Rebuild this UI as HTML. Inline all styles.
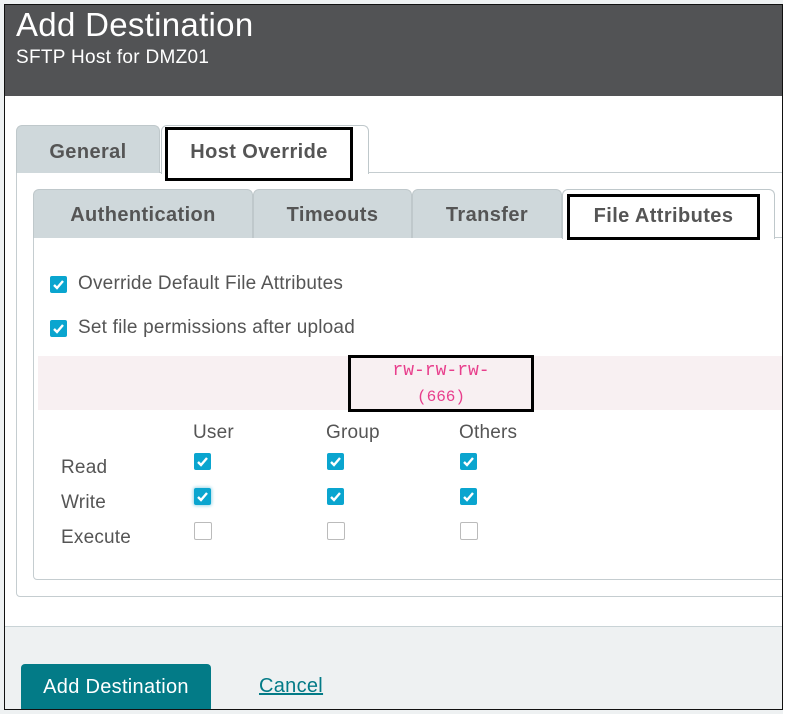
<!DOCTYPE html>
<html><head><style>
body{margin:0;width:786px;height:714px;background:#eef1f2;position:relative;overflow:hidden;font-family:"Liberation Sans",sans-serif;color:#555}
.a{position:absolute}
.frame{left:4px;top:4px;width:777px;height:704px;border:1px solid #111;background:#fff;overflow:hidden}
.tab{position:absolute;background:#cfd8db;border:1px solid #bfc8cb;border-bottom:none;border-radius:6px 6px 0 0;font-weight:bold;font-size:20px;color:#555;text-align:center;box-sizing:border-box;letter-spacing:0.4px}
.cb{position:absolute;width:17px;height:17px;background:#0aa5cf;border-radius:2px}
.cb svg{position:absolute;left:2px;top:2px}
.ucb{position:absolute;width:16px;height:16px;border:1px solid #bbb;border-radius:2px;background:#fff}
.lbl{position:absolute;font-size:19px;color:#555;letter-spacing:0.2px}
</style></head><body>
<div class="a" style="left:783px;top:0;width:3px;height:714px;background:#fff"></div>
<div class="a frame">
 <div class="a" style="left:0;top:0;width:777px;height:91px;background:#525355"></div>
 <div class="a" style="left:11px;top:1px;font-size:33px;color:#fff;letter-spacing:0.3px">Add Destination</div>
 <div class="a" style="left:11px;top:42px;font-size:19px;color:#fff;letter-spacing:0.3px">SFTP Host for DMZ01</div>
 <div class="a" style="left:11px;top:167px;width:780px;height:423px;border:1px solid #c5cdd0;border-radius:0 0 4px 4px"></div>
 <div class="tab" style="left:11px;top:120px;width:144px;height:48px;line-height:52px">General</div>
 <div class="tab" style="left:156px;top:120px;width:208px;height:49px;background:#fff;line-height:48px"></div>
 <div class="a" style="left:160px;top:122px;width:188px;height:54px;border:3px solid #000;box-sizing:border-box;font-weight:bold;font-size:20px;text-align:center;line-height:44px;color:#555;letter-spacing:0.4px">Host Override</div>
 <div class="a" style="left:28px;top:232px;width:760px;height:341px;border:1px solid #c5cdd0;border-radius:0 0 4px 4px"></div>
 <div class="tab" style="left:28px;top:184px;width:220px;height:49px;line-height:50px">Authentication</div>
 <div class="tab" style="left:248px;top:184px;width:159px;height:49px;line-height:50px">Timeouts</div>
 <div class="tab" style="left:407px;top:184px;width:150px;height:49px;line-height:50px">Transfer</div>
 <div class="tab" style="left:557px;top:184px;width:213px;height:50px;background:#fff"></div>
 <div class="a" style="left:562px;top:189px;width:193px;height:46px;border:3px solid #000;box-sizing:border-box;font-weight:bold;font-size:20px;text-align:center;line-height:38px;color:#555;letter-spacing:0.4px">File Attributes</div>

 <div class="cb" style="left:45px;top:271px"><svg width="13" height="13" viewBox="0 0 13 13"><path d="M2 7l3 3 6-7" stroke="#fff" stroke-width="2.4" fill="none"/></svg></div>
 <div class="lbl" style="left:73px;top:268px">Override Default File Attributes</div>
 <div class="cb" style="left:45px;top:315px"><svg width="13" height="13" viewBox="0 0 13 13"><path d="M2 7l3 3 6-7" stroke="#fff" stroke-width="2.4" fill="none"/></svg></div>
 <div class="lbl" style="left:73px;top:312px">Set file permissions after upload</div>

 <div class="a" style="left:33px;top:351px;width:760px;height:54px;background:#f8f0f2"></div>
 <div class="a" style="left:343px;top:350px;width:186px;height:57px;border:3px solid #000;box-sizing:border-box;font-family:'Liberation Mono',monospace;color:#e83e8c;text-align:center;font-size:18px;line-height:26px">rw-rw-rw-<br><span style="font-size:16px">(666)</span></div>

 <div class="lbl" style="left:188px;top:417px">User</div>
 <div class="lbl" style="left:321px;top:417px">Group</div>
 <div class="lbl" style="left:454px;top:417px">Others</div>
 <div class="lbl" style="left:56px;top:452px">Read</div>
 <div class="lbl" style="left:56px;top:487px">Write</div>
 <div class="lbl" style="left:56px;top:522px">Execute</div>

 <div class="cb" style="left:189px;top:448px"><svg width="13" height="13" viewBox="0 0 13 13"><path d="M2 7l3 3 6-7" stroke="#fff" stroke-width="2.4" fill="none"/></svg></div>
 <div class="cb" style="left:322px;top:448px"><svg width="13" height="13" viewBox="0 0 13 13"><path d="M2 7l3 3 6-7" stroke="#fff" stroke-width="2.4" fill="none"/></svg></div>
 <div class="cb" style="left:455px;top:448px"><svg width="13" height="13" viewBox="0 0 13 13"><path d="M2 7l3 3 6-7" stroke="#fff" stroke-width="2.4" fill="none"/></svg></div>
 <div class="cb" style="left:189px;top:483px;box-shadow:0 0 3px 1px #9fd8e8"><svg width="13" height="13" viewBox="0 0 13 13"><path d="M2 7l3 3 6-7" stroke="#fff" stroke-width="2.4" fill="none"/></svg></div>
 <div class="cb" style="left:322px;top:483px"><svg width="13" height="13" viewBox="0 0 13 13"><path d="M2 7l3 3 6-7" stroke="#fff" stroke-width="2.4" fill="none"/></svg></div>
 <div class="cb" style="left:455px;top:483px"><svg width="13" height="13" viewBox="0 0 13 13"><path d="M2 7l3 3 6-7" stroke="#fff" stroke-width="2.4" fill="none"/></svg></div>
 <div class="ucb" style="left:189px;top:517px"></div>
 <div class="ucb" style="left:322px;top:517px"></div>
 <div class="ucb" style="left:455px;top:517px"></div>

 <div class="a" style="left:0;top:621px;width:777px;height:83px;background:#eef1f2;border-top:1px solid #c9d3d6"></div>
 <div class="a" style="left:16px;top:659px;width:190px;height:48px;background:#037b87;border-radius:4px;color:#fff;font-size:20px;text-align:center;line-height:46px;letter-spacing:0.3px">Add Destination</div>
 <div class="a" style="left:254px;top:670px;font-size:20px;color:#037b87;text-decoration:underline;letter-spacing:0.3px">Cancel</div>
</div>
</body></html>
